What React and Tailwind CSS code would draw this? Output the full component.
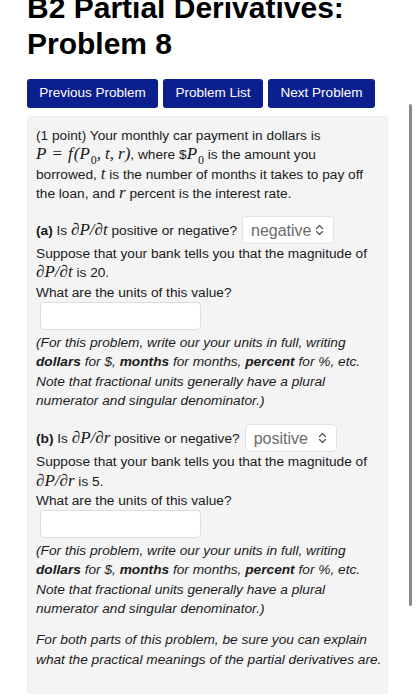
import React from "react";

const serif = '"Liberation Serif", "DejaVu Serif", serif';

function M({ children }) {
  return (
    <span className="italic text-[17px] leading-none whitespace-nowrap" style={{ fontFamily: serif }}>
      {children}
    </span>
  );
}

function Sub() {
  return (
    <sub className="text-[12px] leading-none not-italic align-[-2px] ml-[1px]" style={{ fontFamily: serif }}>
      0
    </sub>
  );
}

function Select({ value }) {
  return (
    <div className="inline-flex items-center justify-between w-[92px] h-[28px] ml-[5px] pl-[8px] pr-[9px] bg-white border border-[#e2e2e2] rounded-[4px] text-[16px] text-[#6b6b6b]">
      <span>{value}</span>
      <svg width="9" height="12" viewBox="0 0 9 12" fill="none" stroke="#555" strokeWidth="1.3" strokeLinecap="round" strokeLinejoin="round">
        <path d="M1.5 4.5 L4.5 1.5 L7.5 4.5" />
        <path d="M1.5 7.5 L4.5 10.5 L7.5 7.5" />
      </svg>
    </div>
  );
}

function Answer() {
  return <div className="ml-[4px] w-[161px] h-[28px] bg-white border border-[#dcdcdc] rounded-[4px]" />;
}

function Note() {
  return (
    <p className="mt-[3px] italic">
      (For this problem, write our your units in full, writing <b>dollars</b> for $, <b>months</b> for months,{" "}
      <b>percent</b> for %, etc. Note that fractional units generally have a plural numerator and singular
      denominator.)
    </p>
  );
}

export default function App() {
  return (
    <div className="relative min-h-[700px] bg-white text-[#1a1a1a] px-[27px]" style={{ fontFamily: '"Liberation Sans", Arial, sans-serif' }}>
      <h1 className="-mt-[10px] text-[30px] leading-[36px] font-bold text-black">
        B2 Partial Derivatives:
        <br />
        Problem 8
      </h1>

      {/* Nav buttons */}
      <div className="flex gap-[5px] mt-[17px]">
        <button className="w-[131px] h-[29px] bg-[#0b1f8e] text-white text-[13.5px] rounded-[3px]">Previous Problem</button>
        <button className="w-[100px] h-[29px] bg-[#0b1f8e] text-white text-[13.5px] rounded-[3px]">Problem List</button>
        <button className="w-[107px] h-[29px] bg-[#0b1f8e] text-white text-[13.5px] rounded-[3px]">Next Problem</button>
      </div>

      {/* Problem panel */}
      <div className="mt-[8px] w-[361px] bg-[#f4f4f4] border border-[#ececec] rounded-[4px] pl-[8px] pr-[2px] pt-[9px] pb-[24px] text-[13.7px] leading-[19.3px]">
        <p>
          (1 point) Your monthly car payment in dollars is{" "}
          <M>
            P<span className="mx-[6px] not-italic">=</span>f<span className="ml-[1px]">(</span>P<Sub />,
            <span className="ml-[4px]">t</span>,<span className="ml-[4px]">r</span>)
          </M>
          , where $
          <M>
            P<Sub />
          </M>{" "}
          is the amount you
          <br />
          borrowed, <M>t</M> is the number of months it takes to pay off
          <br />
          the loan, and <M>r</M> percent is the interest rate.
        </p>

        <div className="mt-[13px] flex items-center h-[28px]">
          <span>
            <b>(a)</b> Is <M>∂P/∂t</M> positive or negative?
          </span>
          <Select value="negative" />
        </div>
        <p>
          Suppose that your bank tells you that the magnitude of <br />
          <M>∂P/∂t</M> is 20.
          <br />
          What are the units of this value?
        </p>
        <Answer />
        <Note />

        <div className="mt-[14px] flex items-center h-[28px]">
          <span>
            <b>(b)</b> Is <M>∂P/∂r</M> positive or negative?
          </span>
          <Select value="positive" />
        </div>
        <p>
          Suppose that your bank tells you that the magnitude of <br />
          <M>∂P/∂r</M> is 5.
          <br />
          What are the units of this value?
        </p>
        <Answer />
        <Note />

        <p className="mt-[12px] italic">
          For both parts of this problem, be sure you can explain what the practical meanings of the partial
          derivatives are.
        </p>
      </div>

      {/* scrollbar indicator */}
      <div className="absolute left-[409px] top-[114px] w-[3px] h-[502px] bg-[#8a8a8a] rounded-full" />
    </div>
  );
}
